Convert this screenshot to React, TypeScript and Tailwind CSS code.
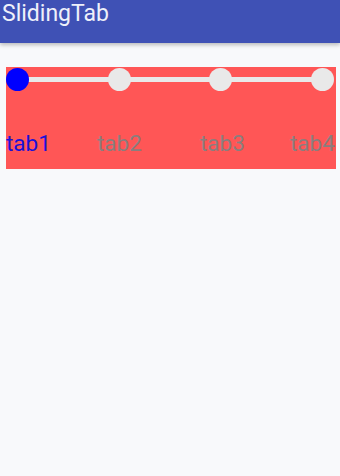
const tabs = [
  { label: "tab1", cell: "w-[91px]" },
  { label: "tab2", cell: "w-[103px]" },
  { label: "tab3", cell: "w-[90px]" },
  { label: "tab4", cell: "flex-1" },
];

const SlidingTab = ({ active }: { active: number }) => {
  return (
    <div className="ml-[6px] mr-[4px] h-[102px] bg-[#ff5656] overflow-hidden">
      <div className="relative flex justify-between pr-[2px] pt-[1px]">
        <div className="absolute left-[12px] right-[14px] top-[10px] h-[5px] bg-[#e9e9e9]" />
        {tabs.map((t, i) => (
          <div
            key={t.label}
            className={
              i === active
                ? "relative size-[23px] rounded-full bg-[#0000ff]"
                : "relative size-[23px] rounded-full bg-[#e9e9e9]"
            }
          />
        ))}
      </div>
      <div className="mt-[39px] flex whitespace-nowrap text-[22.5px] leading-[26px] font-['Roboto',sans-serif]">
        {tabs.map((t, i) => (
          <div key={t.label} className={t.cell}>
            <span className={i === active ? "text-[#1a10d8]" : "text-[#8a7e7e]"}>{t.label}</span>
          </div>
        ))}
      </div>
    </div>
  );
};

export default function App() {
  return (
    <div className="min-h-[476px] w-[340px] bg-[#f8f9fb] font-['Roboto',sans-serif]">
      <div className="h-[43px] bg-[#3f51b5] pl-[2px] shadow-[0_2px_4px_rgba(0,0,0,0.25)]">
        <span className="block text-[23px] leading-[27px] text-[#eef0fa]">SlidingTab</span>
      </div>
      <div className="pt-[24px]">
        <SlidingTab active={0} />
      </div>
    </div>
  );
}
